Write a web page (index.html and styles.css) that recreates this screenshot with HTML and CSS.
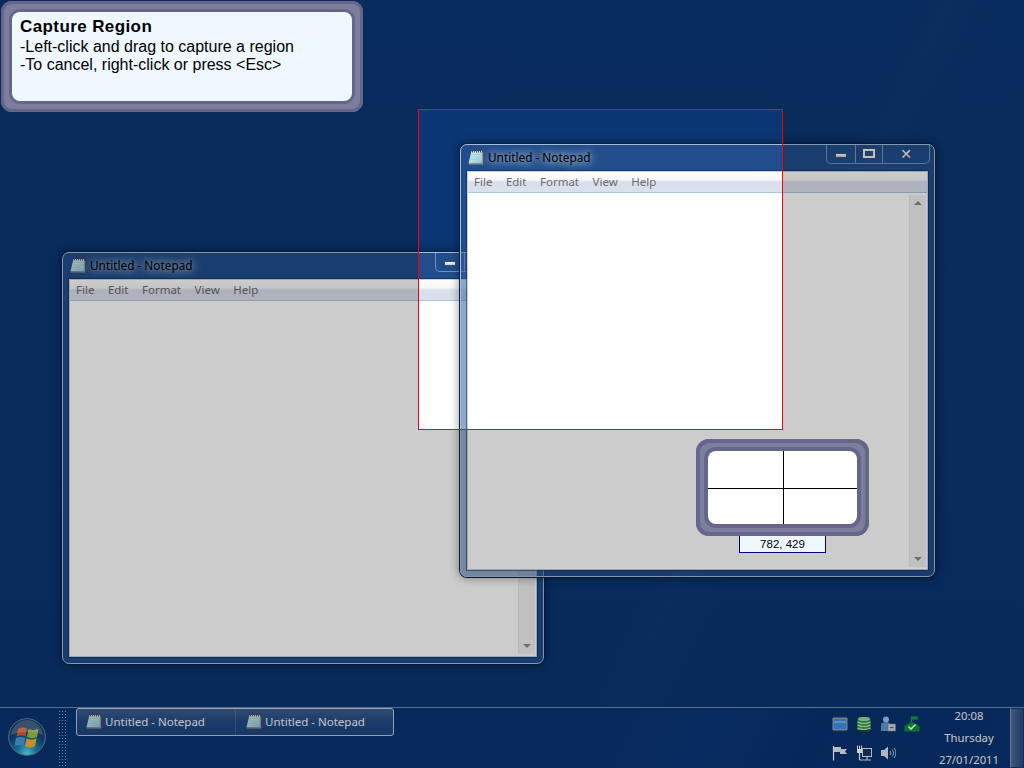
FILE: index.html
```html
<!DOCTYPE html>
<html lang="en">
<head>
    <meta charset="UTF-8">
    <title>Capture Region</title>
    <link rel="stylesheet" href="styles.css">
</head>
<body>
    <svg class="defs" width="0" height="0">
        <defs>
            <linearGradient id="padPage" x1="0" y1="0" x2="1" y2="1">
                <stop offset="0" stop-color="#e2f6f8"/>
                <stop offset="1" stop-color="#86c4d6"/>
            </linearGradient>
            <symbol id="notepad" viewBox="0 0 16 16">
                <path d="M3.500 2h11v12.500H0.500z" fill="url(#padPage)"/>
                <path d="M3.500 5.500h10.500M3 8h11M2.500 10.500h11.500" stroke="#a3d2de" stroke-width="1"/>
                <path d="M14.500 2v13H1" fill="none" stroke="#b09462" stroke-width="1.200"/>
                <path d="M4.500 0.500v3M6.500 0.500v3M8.500 0.500v3M10.500 0.500v3M12.500 0.500v3M14.500 0.500v3" stroke="#4a4a4a" stroke-width="1"/>
            </symbol>
        </defs>
    </svg>

    <div class="screen">
        <div class="desktop">
            <div class="window window-back">
                <div class="titlebar">
                    <svg class="app-icon"><use href="#notepad"/></svg>
                    <span class="title">Untitled - Notepad</span>
                </div>
                <div class="winbtns">
                    <span class="winbtn btn-min"><i class="glyph-min"></i></span>
                    <span class="winbtn btn-max"><i class="glyph-max"></i></span>
                    <span class="winbtn btn-close"><i class="glyph-close">&#x2715;</i></span>
                </div>
                <div class="frame">
                    <div class="menubar">
                        <span>File</span><span>Edit</span><span>Format</span><span>View</span><span>Help</span>
                    </div>
                    <div class="content">
                        <div class="scrollbar"><i class="arrow-up"></i><i class="arrow-down"></i></div>
                    </div>
                </div>
            </div>

            <div class="window window-front">
                <div class="titlebar">
                    <svg class="app-icon"><use href="#notepad"/></svg>
                    <span class="title">Untitled - Notepad</span>
                </div>
                <div class="winbtns">
                    <span class="winbtn btn-min"><i class="glyph-min"></i></span>
                    <span class="winbtn btn-max"><i class="glyph-max"></i></span>
                    <span class="winbtn btn-close"><i class="glyph-close">&#x2715;</i></span>
                </div>
                <div class="frame">
                    <div class="menubar">
                        <span>File</span><span>Edit</span><span>Format</span><span>View</span><span>Help</span>
                    </div>
                    <div class="content">
                        <div class="scrollbar"><i class="arrow-up"></i><i class="arrow-down"></i></div>
                    </div>
                </div>
            </div>
        </div>

        <div class="taskbar">
            <div class="start">
                <svg class="orb" viewBox="0 0 38 38">
                    <defs>
                        <radialGradient id="orbFill" cx="0.5" cy="0.95" r="0.8">
                            <stop offset="0" stop-color="#5fe6f5"/>
                            <stop offset="0.35" stop-color="#1b86b8"/>
                            <stop offset="0.7" stop-color="#0f4a80"/>
                            <stop offset="1" stop-color="#123a62"/>
                        </radialGradient>
                    </defs>
                    <circle cx="19" cy="19" r="18.300" fill="url(#orbFill)" stroke="#6f8aa6" stroke-width="1"/>
                    <path d="M10 11c3-2 6-2 9-.5l-1.500 8c-3-1.500-6-1.500-9 0z" fill="#e0592c"/>
                    <path d="M20.500 11c3 1.500 6 1.500 10-.5l-1.500 8.500c-3 1.500-6 1.500-10 0z" fill="#9cc23e"/>
                    <path d="M8 20c3-1.500 6-1.500 9 0l-1.500 8c-3-1.500-6-1.500-9 0z" fill="#4b9ce0"/>
                    <path d="M18.500 20.500c3 1.500 6 1.500 10-.5l-1.500 8.500c-3 1.500-6 1.500-10 0z" fill="#f0b52e"/>
                    <path d="M3 17C4 8 11 2 19 2s15 6 16 15C27 13 11 13 3 17z" fill="#fff" opacity="0.22"/>
                </svg>
            </div>
            <div class="gripper"></div>
            <div class="task-group">
                <div class="task">
                    <svg class="app-icon"><use href="#notepad"/></svg>
                    <span>Untitled - Notepad</span>
                </div>
                <div class="task">
                    <svg class="app-icon"><use href="#notepad"/></svg>
                    <span>Untitled - Notepad</span>
                </div>
            </div>
            <div class="tray">
                <div class="tray-icons">
                    <svg viewBox="0 0 16 16"><rect x="0.500" y="1.500" width="15" height="13" rx="1" fill="#8f9fae"/><rect x="2" y="3" width="12" height="10" fill="#3f92e6"/><rect x="2" y="5.500" width="12" height="1" fill="#a9d0f5"/></svg>
                    <svg viewBox="0 0 16 16"><rect x="1.500" y="1" width="13" height="14.500" rx="3" fill="#2f9a48"/><ellipse cx="8" cy="3" rx="6" ry="2" fill="#9ad89a"/><path d="M1.500 6c3 2 10 2 13 0M1.500 9c3 2 10 2 13 0M1.500 12c3 2 10 2 13 0" stroke="#cdeec6" stroke-width="1.100" fill="none"/><path d="M3 14.500c3 1 8 1 10-1" stroke="#0b3d1d" stroke-width="1.500" fill="none"/></svg>
                    <svg viewBox="0 0 16 16"><circle cx="6" cy="3.500" r="3" fill="#9cc8ea"/><path d="M1 15V9c0-2 2-3 5-3s4 1 4 2v7z" fill="#5b9bd2"/><rect x="8" y="8" width="7.500" height="7" fill="#cfd7de" stroke="#7f8d9a" stroke-width="0.500"/><rect x="10" y="11" width="3.500" height="1.200" fill="#5b6b7a"/></svg>
                    <svg viewBox="0 0 16 16"><path d="M7.500 0.500v6" stroke="#12a83c" stroke-width="1.300"/><path d="M7.500 0.500h7l-1.500 1.500 1.500 1.500h-7z" fill="#12a83c"/><path d="M0.500 10L7.500 5.500l8 4.500v5.500H0.500z" fill="#0b9434"/><path d="M4.500 10.500l2.500 2.500L11.500 8.500" stroke="#fff" stroke-width="1.700" fill="none"/></svg>
                    <svg viewBox="0 0 16 16"><path d="M1.500 1v14.500" stroke="#fff" stroke-width="1.200"/><path d="M2 2h7v2h6l-2 2.500 2 2.500H8V7H2z" fill="#e3e8ee"/></svg>
                    <svg viewBox="0 0 16 16"><path d="M1.500 0.500v4M3.500 0.500v4M5.500 0.500v4" stroke="#fff" stroke-width="1"/><rect x="1" y="4" width="5" height="4" fill="#fff"/><path d="M3.500 8v7" stroke="#fff" stroke-width="1.200"/><rect x="6.500" y="3.500" width="9" height="8" fill="#16365f" stroke="#dfe6ee" stroke-width="1"/><path d="M3.500 15H15M11 12v3" stroke="#dfe6ee" stroke-width="1.200"/></svg>
                    <svg viewBox="0 0 16 16"><path d="M1 5h3l4-3.500v13L4 11H1z" fill="#dfe5ec"/><path d="M10 6c1 1 1 3 0 4M12 4.500c2 2 2 5 0 7M14 3c2.500 3 2.500 7 0 10" stroke="#c7d2de" stroke-width="1" fill="none"/></svg>
                </div>
                <div class="clock">
                    <span>20:08</span>
                    <span>Thursday</span>
                    <span>27/01/2011</span>
                </div>
                <div class="show-desktop"></div>
            </div>
        </div>

        <!-- dim layer, the hole in it is the selected region -->
        <div class="dim-layer">
            <div class="selection"></div>
        </div>

        <div class="help-panel">
            <div class="help-inner">
                <h1>Capture Region</h1>
                <p>-Left-click and drag to capture a region</p>
                <p>-To cancel, right-click or press &lt;Esc&gt;</p>
            </div>
        </div>

        <div class="magnifier">
            <div class="lens">
                <div class="lens-inner"></div>
            </div>
            <div class="coords">782, 429</div>
        </div>
    </div>
</body>
</html>
```

FILE: styles.css
```css
* {
    box-sizing: border-box;
}
body {
    margin: 0;
    overflow: hidden;
    font-family: "Noto Sans", sans-serif;
}
.defs {
    position: absolute;
}
.screen {
    position: relative;
    width: 1024px;
    height: 768px;
    display: flex;
    flex-direction: column;
    overflow: hidden;
    background-color: #0b3775;
}
.desktop {
    position: relative;
    flex: 1;
    background:
        linear-gradient(115deg, transparent 68%, rgba(255,255,255,.015) 70%, transparent 74%),
        linear-gradient(180deg, #0b3775, #0a3572);
}

/* aero windows */
.window {
    position: absolute;
    display: flex;
    flex-direction: column;
    padding: 0 6px 6px;
    border-radius: 7px;
    background: rgba(52, 96, 160, .55);
    border: 1px solid #a6bcd6;
    box-shadow: 0 0 0 1px #0a2346, 0 0 8px 2px rgba(0, 0, 0, .35);
}
.window-back {
    left: 62px;
    top: 252px;
    width: 482px;
    height: 412px;
}
.window-front {
    left: 460px;
    top: 144px;
    width: 475px;
    height: 433px;
}
.titlebar {
    height: 26px;
    display: flex;
    align-items: center;
    gap: 4px;
    padding: 0 0 2px 1px;
    flex-shrink: 0;
}
.app-icon {
    width: 16px;
    height: 16px;
    flex-shrink: 0;
}
.title {
    font-size: 11.8px;
    color: #000;
    text-shadow: 0 0 6px rgba(255,255,255,.7), 0 0 12px rgba(255,255,255,.6), 0 0 16px rgba(255,255,255,.4);
}
.winbtns {
    position: absolute;
    top: -1px;
    right: 4px;
    height: 20px;
    width: 104px;
    display: flex;
    border: 1px solid rgba(200, 215, 235, .5);
    border-top: 0;
    border-radius: 0 0 5px 5px;
}
.winbtn {
    display: flex;
    align-items: center;
    justify-content: center;
    border-right: 1px solid rgba(200, 215, 235, .5);
}
.btn-min {
    width: 29px;
}
.btn-max {
    width: 27px;
}
.btn-close {
    flex: 1;
    border-right: 0;
}
.glyph-min {
    width: 12px;
    height: 5px;
    margin-top: 3px;
    background: linear-gradient(#fff, #c8ccd2);
    border: 1px solid #3a4f6e;
}
.glyph-max {
    width: 12px;
    height: 9px;
    background: #2c5186;
    border: 2px solid #eef1f5;
    outline: 1px solid #3a4f6e;
}
.glyph-close {
    font: bold 14px "DejaVu Sans", sans-serif;
    color: #f4f5f7;
    text-shadow: 0 0 1px #2a3e5c;
}
.frame {
    flex: 1;
    display: flex;
    flex-direction: column;
    border: 1px solid #c3d2e6;
    box-shadow: 0 0 0 1px rgba(10, 35, 70, .5);
    min-height: 0;
}
.menubar {
    height: 21px;
    display: flex;
    align-items: center;
    gap: 13.5px;
    padding: 0 0 2px 6px;
    font-size: 11.5px;
    color: #6e6a6a;
    background: linear-gradient(#fff 0, #f6f7fb 40%, #d9deeb 50%, #dbe0ed 100%);
    border-bottom: 1px solid #a9c4dc;
    flex-shrink: 0;
}
.content {
    flex: 1;
    display: flex;
    justify-content: flex-end;
    background: #fff;
    min-height: 0;
}
.scrollbar {
    position: relative;
    width: 17px;
    margin: 2px 1px 2px 0;
    background: #f0f0f0;
    border-left: 1px solid #e8e8e8;
}
.arrow-up,
.arrow-down {
    position: absolute;
    left: 4px;
    width: 0;
    height: 0;
    border-left: 4px solid transparent;
    border-right: 4px solid transparent;
}
.arrow-up {
    top: 6px;
    border-bottom: 4px solid #8a8a8a;
}
.arrow-down {
    bottom: 6px;
    border-top: 4px solid #8a8a8a;
}

/* taskbar */
.taskbar {
    height: 61px;
    display: flex;
    flex-shrink: 0;
    background: linear-gradient(115deg, #0a3472 60%, #0b3878 68%, #083170 78%, #0a3472);
    border-top: 1px solid #6f8aad;
}
.start {
    width: 58px;
    padding: 10px 0 0 8px;
}
.orb {
    display: block;
    width: 38px;
    height: 38px;
}
.gripper {
    width: 8px;
    margin: 2px 0;
    background-image: radial-gradient(#8aa3c0 0.8px, transparent 1px);
    background-size: 3px 3px;
}
.task-group {
    margin: 0 0 auto 10px;
    display: flex;
    width: 318px;
    height: 28px;
    border: 1px solid #b9c9dc;
    border-radius: 3px;
    background: linear-gradient(#3d5f90, #234a85 50%, #1d4580);
}
.task {
    width: 159px;
    display: flex;
    align-items: center;
    gap: 3px;
    padding: 0 0 2px 9px;
    font-size: 11.5px;
    color: #f2f5f9;
    border-right: 1px solid rgba(255,255,255,.12);
}
.task:last-child {
    flex: 1;
    padding-left: 10px;
    border-right: 0;
}
.tray {
    margin-left: auto;
    display: flex;
}
.tray-icons {
    width: 96px;
    display: grid;
    grid-template-columns: repeat(4, 16px);
    column-gap: 8px;
    row-gap: 13px;
    align-content: start;
    padding-top: 8px;
}
.tray-icons svg {
    width: 16px;
    height: 16px;
    display: block;
}
.clock {
    width: 82px;
    display: flex;
    flex-direction: column;
    justify-content: space-between;
    align-items: center;
    font-size: 11.3px;
    color: #f4f6f9;
    line-height: 16px;
}
.show-desktop {
    width: 14px;
    background: linear-gradient(90deg, #4d6d9c, #2a4c80);
    border: 1px solid #1c3a68;
    border-left-color: #7f9bc0;
}

/* capture overlay */
.dim-layer {
    position: absolute;
    inset: 0;
    overflow: hidden;
}
.selection {
    position: absolute;
    left: 418px;
    top: 109px;
    width: 365px;
    height: 321px;
    border: 1px solid #ff0000;
    box-shadow: 0 0 0 1200px rgba(0, 0, 0, .2);
}
.help-panel {
    position: absolute;
    left: 1px;
    top: 1px;
    width: 362px;
    height: 111px;
    padding: 11px;
    border-radius: 11px;
    background: #7d7d9d;
    box-shadow: inset 0 0 0 3px #66668a;
}
.help-inner {
    height: 100%;
    padding: 5px 8px;
    border-radius: 8px;
    background: #f0f8ff;
    box-shadow: 0 0 0 3px #66668a;
    font-family: "Liberation Sans", Arial, sans-serif;
    font-size: 16px;
    line-height: 18px;
    color: #000;
}
.help-inner h1 {
    margin: 0 0 2px;
    font-size: 17px;
    line-height: 19px;
    letter-spacing: .4px;
}
.help-inner p {
    margin: 0;
}
.magnifier {
    position: absolute;
    left: 696px;
    top: 439px;
    width: 173px;
    display: flex;
    flex-direction: column;
    align-items: center;
}
.lens {
    width: 173px;
    height: 97px;
    padding: 12px 12px;
    border-radius: 13px;
    background: #7d7d9d;
    box-shadow: inset 0 0 0 4px #66668a;
}
.lens-inner {
    height: 100%;
    border-radius: 8px;
    background-color: #fff;
    background-image: linear-gradient(#000, #000), linear-gradient(#000, #000);
    background-size: 1px 100%, 100% 1px;
    background-position: 75px 0, 0 37px;
    background-repeat: no-repeat;
    box-shadow: 0 0 0 4px #66668a;
}
.coords {
    width: 87px;
    height: 17px;
    font: 11.5px/17px "Liberation Sans", Arial, sans-serif;
    text-align: center;
    color: #000;
    background: #f0f8ff;
    border: 1px solid #000080;
    border-top: 0;
}
```
